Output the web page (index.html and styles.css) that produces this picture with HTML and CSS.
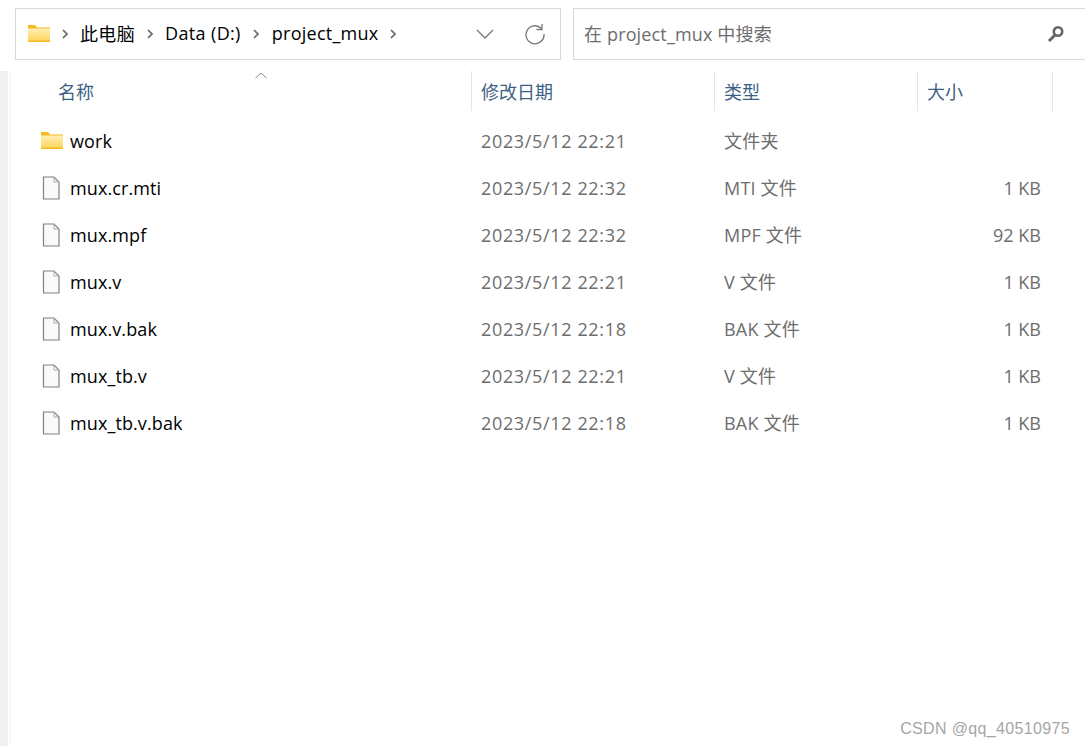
FILE: index.html
```html
<!DOCTYPE html>
<html lang="zh">
<head>
<meta charset="utf-8">
<title>project_mux</title>
<link rel="stylesheet" href="styles.css">
</head>
<body>
<svg class="defs" width="0" height="0"><defs><linearGradient id="fold" x1="0" y1="0" x2="0" y2="1"><stop offset="0" stop-color="#fff0b4"/><stop offset="1" stop-color="#ffd65e"/></linearGradient></defs></svg>
<div class="toolbar">
  <div class="address">
    <svg class="folder-top" width="22" height="17" viewBox="0 0 22 17"><path d="M0 0h7l2 2.500h13V17H0z" fill="#f7b924"/><path d="M0 3.500h22V15.500H0z" fill="url(#fold)"/></svg>
    <svg class="chev" viewBox="0 0 8 12"><path d="M2 2l4 4-4 4" fill="none" stroke="#666" stroke-width="1.700"/></svg>
    <span class="crumb">此电脑</span>
    <svg class="chev" viewBox="0 0 8 12"><path d="M2 2l4 4-4 4" fill="none" stroke="#666" stroke-width="1.700"/></svg>
    <span class="crumb">Data (D:)</span>
    <svg class="chev" viewBox="0 0 8 12"><path d="M2 2l4 4-4 4" fill="none" stroke="#666" stroke-width="1.700"/></svg>
    <span class="crumb crumb-last">project_mux</span>
    <svg class="chev" viewBox="0 0 8 12"><path d="M2 2l4 4-4 4" fill="none" stroke="#666" stroke-width="1.700"/></svg>
    <span class="spacer"></span>
    <svg class="drop" width="18" height="10" viewBox="0 0 18 10"><path d="M1 1l8 8 8-8" fill="none" stroke="#777" stroke-width="1.300"/></svg>
    <svg class="refresh" width="22" height="22" viewBox="0 0 22 22"><path d="M17.500 5.500A9 9 0 1 0 20 11" fill="none" stroke="#777" stroke-width="1.300"/><path d="M18 1v5.500h-5.500" fill="none" stroke="#777" stroke-width="1.300"/></svg>
  </div>
  <div class="search">
    <span class="search-text">在 project_mux 中搜索</span>
    <svg class="lens" width="18" height="18" viewBox="0 0 18 18"><circle cx="11" cy="6.500" r="4.200" fill="none" stroke="#666" stroke-width="2.600"/><path d="M8 10l-6 6" stroke="#666" stroke-width="3" fill="none"/></svg>
  </div>
</div>
<div class="main">
  <div class="rail"></div>
  <div class="pane">
    <svg class="sort" width="14" height="7" viewBox="0 0 14 7"><path d="M1.500 6l5.500-5 5.500 5" fill="none" stroke="#888" stroke-width="1"/></svg>
    <div class="header">
      <div class="h h-name">名称</div>
      <div class="h h-date">修改日期</div>
      <div class="h h-type">类型</div>
      <div class="h h-size">大小</div>
    </div>
    <div class="row">
      <div class="c-name"><svg class="ico-folder" width="22" height="17" viewBox="0 0 22 17"><path d="M0 0h7l2 2.500h13V17H0z" fill="#f7b924"/><path d="M0 3.500h22V15.500H0z" fill="url(#fold)"/></svg><span>work</span></div>
      <div class="c-date">2023/5/12 22:21</div><div class="c-type">文件夹</div><div class="c-size"></div>
    </div>
    <div class="row">
      <div class="c-name"><svg class="ico-file" width="18" height="24" viewBox="0 0 18 24"><path d="M1.500 1h10.500l5 5v17H1.500z" fill="#fafafa" stroke="#808080" stroke-width="1.200"/><path d="M12 1v5h5" fill="none" stroke="#aaa" stroke-width="1"/></svg><span>mux.cr.mti</span></div>
      <div class="c-date">2023/5/12 22:32</div><div class="c-type">MTI 文件</div><div class="c-size">1 KB</div>
    </div>
    <div class="row">
      <div class="c-name"><svg class="ico-file" width="18" height="24" viewBox="0 0 18 24"><path d="M1.500 1h10.500l5 5v17H1.500z" fill="#fafafa" stroke="#808080" stroke-width="1.200"/><path d="M12 1v5h5" fill="none" stroke="#aaa" stroke-width="1"/></svg><span>mux.mpf</span></div>
      <div class="c-date">2023/5/12 22:32</div><div class="c-type">MPF 文件</div><div class="c-size">92 KB</div>
    </div>
    <div class="row">
      <div class="c-name"><svg class="ico-file" width="18" height="24" viewBox="0 0 18 24"><path d="M1.500 1h10.500l5 5v17H1.500z" fill="#fafafa" stroke="#808080" stroke-width="1.200"/><path d="M12 1v5h5" fill="none" stroke="#aaa" stroke-width="1"/></svg><span>mux.v</span></div>
      <div class="c-date">2023/5/12 22:21</div><div class="c-type">V 文件</div><div class="c-size">1 KB</div>
    </div>
    <div class="row">
      <div class="c-name"><svg class="ico-file" width="18" height="24" viewBox="0 0 18 24"><path d="M1.500 1h10.500l5 5v17H1.500z" fill="#fafafa" stroke="#808080" stroke-width="1.200"/><path d="M12 1v5h5" fill="none" stroke="#aaa" stroke-width="1"/></svg><span>mux.v.bak</span></div>
      <div class="c-date">2023/5/12 22:18</div><div class="c-type">BAK 文件</div><div class="c-size">1 KB</div>
    </div>
    <div class="row">
      <div class="c-name"><svg class="ico-file" width="18" height="24" viewBox="0 0 18 24"><path d="M1.500 1h10.500l5 5v17H1.500z" fill="#fafafa" stroke="#808080" stroke-width="1.200"/><path d="M12 1v5h5" fill="none" stroke="#aaa" stroke-width="1"/></svg><span>mux_tb.v</span></div>
      <div class="c-date">2023/5/12 22:21</div><div class="c-type">V 文件</div><div class="c-size">1 KB</div>
    </div>
    <div class="row">
      <div class="c-name"><svg class="ico-file" width="18" height="24" viewBox="0 0 18 24"><path d="M1.500 1h10.500l5 5v17H1.500z" fill="#fafafa" stroke="#808080" stroke-width="1.200"/><path d="M12 1v5h5" fill="none" stroke="#aaa" stroke-width="1"/></svg><span>mux_tb.v.bak</span></div>
      <div class="c-date">2023/5/12 22:18</div><div class="c-type">BAK 文件</div><div class="c-size">1 KB</div>
    </div>
    <div class="watermark">CSDN @qq_40510975</div>
  </div>
</div>
</body>
</html>
```
FILE: styles.css
```css
* { box-sizing: border-box; }
html, body { margin: 0; height: 100%; overflow: hidden; background: #fff; }
body {
  font-family: "Open Sans", "Noto Sans CJK SC", sans-serif;
  font-size: 18px;
  color: #000;
  display: flex;
  flex-direction: column;
  width: 1085px;
  height: 746px;
}
.defs { position: absolute; }
.toolbar {
  display: flex;
  gap: 12px;
  padding: 8px 0 0 15px;
  height: 71px;
  flex: none;
}
.address, .search {
  height: 52px;
  border: 1px solid #d9d9d9;
  display: flex;
  align-items: center;
}
.address { width: 546px; padding-left: 12px; }
.folder-top { flex: none; margin-bottom: 1px; }
.chev { width: 8px; height: 12px; flex: none; margin: 0 11px; }
.crumb { white-space: nowrap; letter-spacing: 0.35px; padding-bottom: 2px; }
.crumb-last { margin-left: 1px; letter-spacing: 0.25px; }
.spacer { flex: 1; }
.drop { margin-right: 30px; }
.refresh { margin-right: 14px; }
.search { flex: 1; padding: 0 20px 0 10px; border-right: none; justify-content: space-between; }
.search-text { color: #6d6d6d; white-space: nowrap; letter-spacing: 0.15px; padding-bottom: 2px; }
.main { flex: 1; display: flex; min-height: 0; }
.rail { width: 8px; background: #f0f0f0; flex: none; }
.pane { flex: 1; margin-left: 2px; border-left: 1px solid #f2f2f2; position: relative; }
.sort { position: absolute; left: 243px; top: 1px; }
.header { display: flex; height: 40px; color: #3d5f85; }
.h { height: 40px; display: flex; align-items: center; border-right: 1px solid #e5e5e5; padding-bottom: 1px; }
.h-name { width: 461px; padding-left: 47px; }
.h-date { width: 243px; padding-left: 9px; }
.h-type { width: 203px; padding-left: 9px; }
.h-size { width: 135px; padding-left: 9px; }
.row { display: flex; height: 47px; align-items: center; color: #6d6d6d; }
.header + .row { margin-top: 6px; }
.c-name { width: 461px; padding-left: 30px; display: flex; align-items: center; color: #000; letter-spacing: 0.1px; }
.ico-folder { flex: none; margin-right: 7px; }
.ico-file { flex: none; margin: 0 10px 0 1px; }
.c-date { width: 243px; padding-left: 9px; letter-spacing: 0.65px; }
.c-type { width: 203px; padding-left: 9px; padding-bottom: 2px; letter-spacing: 0.2px; }
.c-size { width: 123px; text-align: right; }
.watermark {
  position: absolute;
  right: 15px;
  bottom: 8px;
  font-family: "Liberation Sans", sans-serif;
  font-size: 16px;
  letter-spacing: 0.35px;
  color: #a6a6a6;
}
```
